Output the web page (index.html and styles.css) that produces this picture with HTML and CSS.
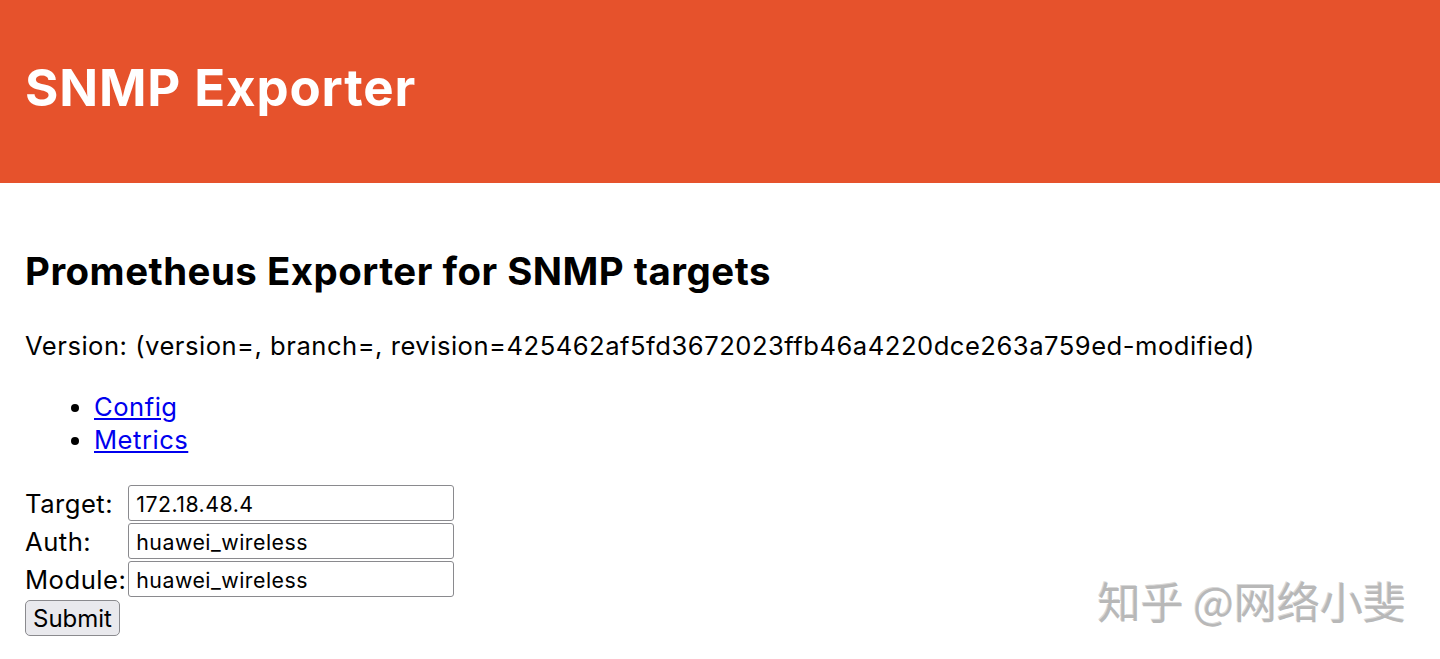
FILE: index.html
```html
<!DOCTYPE html>
<html lang="en">
  <head>
    <meta charset="UTF-8" />
    <meta name="viewport" content="width=device-width, initial-scale=1.0" />
    <title>SNMP Exporter</title>
    <link rel="stylesheet" href="styles.css">
  </head>
  <body>
    <header>
      <h1>SNMP Exporter</h1>
    </header>
    <div class="main">
      <h2>Prometheus Exporter for SNMP targets</h2>
      <p>Version: (version=, branch=, revision=425462af5fd3672023ffb46a4220dce263a759ed-modified)</p>
      <ul>
        <li><a href="config">Config</a></li>
        <li><a href="metrics">Metrics</a></li>
      </ul>
      <form action="snmp">
        <div class="fields">
          <label for="target">Target:</label>
          <input type="text" id="target" name="target" value="172.18.48.4" />
          <label for="auth">Auth:</label>
          <input type="text" id="auth" name="auth" value="huawei_wireless" />
          <label for="module">Module:</label>
          <input type="text" id="module" name="module" value="huawei_wireless" />
        </div>
        <button type="submit">Submit</button>
      </form>
    </div>
    <div class="watermark">知乎 @网络小斐</div>
  </body>
</html>
```

FILE: styles.css
```css
body {
  font-family: Inter, "Liberation Sans", sans-serif;
  font-size: 25.6px;
  line-height: 33px;
  letter-spacing: 0.5px;
  margin: 0;
  color: #000;
}
header {
  background-color: #e6522c;
  color: #fff;
  height: 183px;
  padding: 0 25px;
  display: flex;
  align-items: center;
}
h1 {
  font-size: 51px;
  line-height: 60px;
  letter-spacing: 0.85px;
  margin: 0;
  padding-bottom: 8px;
}
.main {
  padding: 0 25px;
}
h2 {
  font-size: 38.4px;
  line-height: 46px;
  margin: 65px 0 0;
}
p {
  margin: 35px 0 0;
}
ul {
  margin: 28px 0 0;
  padding-left: 69px;
}
a {
  color: #0000ee;
}
.fields {
  display: grid;
  grid-template-columns: auto 326px;
  column-gap: 2px;
  row-gap: 2px;
  align-items: center;
  justify-content: start;
  margin-top: 29px;
}
input {
  font-family: inherit;
  font-size: 21.3px;
  letter-spacing: 0.5px;
  height: 36px;
  box-sizing: border-box;
  margin: 0;
  padding: 2px 7px 0;
  border: 1px solid #8a8a8e;
  border-radius: 3px;
}
button {
  font-family: inherit;
  font-size: 24px;
  letter-spacing: 0;
  height: 36px;
  margin-top: 3px;
  padding: 0 7px;
  background-color: #e9e9ed;
  border: 1px solid #8a8a8e;
  border-radius: 5px;
}
.watermark {
  position: absolute;
  top: 575px;
  right: 34px;
  font-family: "Noto Sans CJK SC", sans-serif;
  font-size: 43px;
  line-height: 50px;
  letter-spacing: 0;
  color: #b8b8b8;
  text-shadow: 1px 1px 0 #fff, -1px -1px 0 #d8d8d8;
}
```
